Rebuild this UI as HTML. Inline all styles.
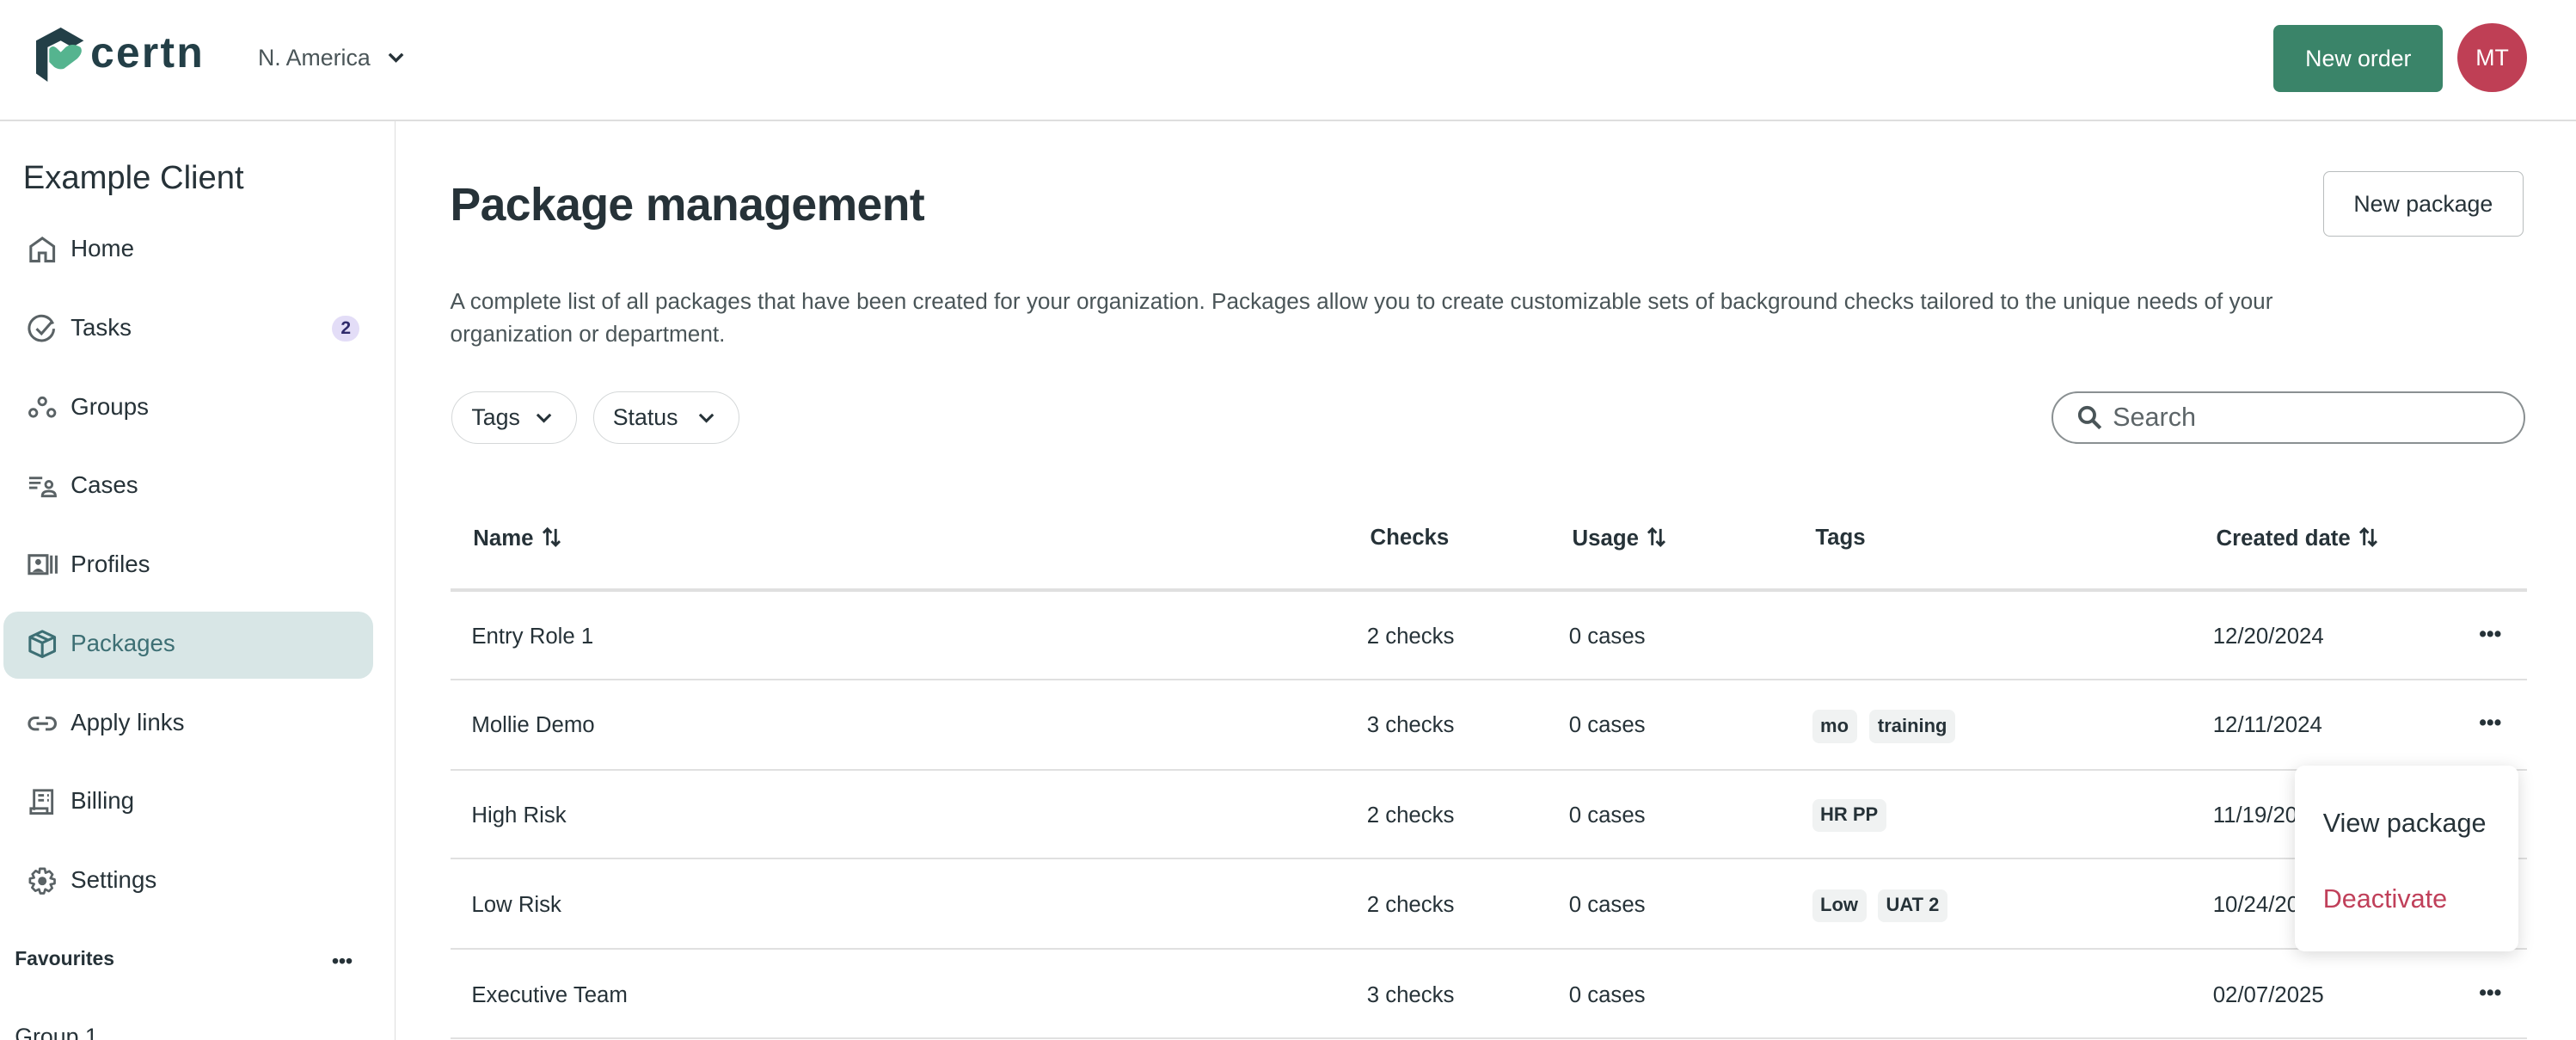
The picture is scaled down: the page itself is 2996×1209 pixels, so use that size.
<!DOCTYPE html>
<html><head><meta charset="utf-8"><style>
html,body{margin:0;padding:0;background:#fff;overflow:hidden}
#r{position:relative;width:1568px;height:633px;zoom:1.9107;font-family:"Liberation Sans",sans-serif;color:#263238;overflow:hidden}
.a{position:absolute;white-space:nowrap}
.nav{position:absolute;left:0;width:240px;height:20px}
.nav svg{position:absolute;left:17px;top:1px}
.nav span{position:absolute;left:43px;top:1px;font-size:14.5px;color:#263238}
.th{position:absolute;top:320px;font-size:13.5px;font-weight:bold;color:#263238}
.td{position:absolute;font-size:13.5px;color:#263238}
.line{position:absolute;left:274px;width:1264px;height:1px;background:#e0e0e0}
.chip{position:absolute;background:#f0f2f2;border-radius:4px;font-size:11.5px;font-weight:bold;padding:3px 5px;color:#263238;height:14px;line-height:14px}
.dots{position:absolute;left:1509px;font-size:13px;font-weight:bold;letter-spacing:0}
.sort{display:inline-block;vertical-align:-2px;margin-left:5px}
</style></head><body><div id="r">
<!-- header -->
<svg class="a" style="left:22px;top:17px" width="30" height="33" viewBox="0 0 30 33"><path d="M15 0 L29 8 L22 12 L15 8 L7 12 V21 L7 33 L0 28 V8 Z" fill="#233f47"/><path d="M8 13 Q10 10 13 13 L15 15 L18 12 Q22 9 27 12 Q29 15 25 19 L17 25 Q14 26 11 24 L8 21 Z" fill="#55b48f"/></svg>
<div class="a" style="left:55px;top:17px;font-size:26px;font-weight:bold;color:#233f47;letter-spacing:1.2px">certn</div>
<div class="a" style="left:157px;top:27px;font-size:14px;color:#4a5558">N. America</div>
<svg class="a" style="left:236px;top:31px" width="10" height="8" viewBox="0 0 10 8"><path d="M1 2 L5 6 L9 2" stroke="#263238" stroke-width="1.8" fill="none"/></svg>
<div class="a" style="left:1384px;top:15px;width:103px;height:41px;background:#3a8469;border-radius:4px;color:#fff;font-size:14px;line-height:41px;text-align:center">New order</div>
<div class="a" style="left:1496px;top:14px;width:42px;height:42px;border-radius:50%;background:#bf3f55;color:#fff;font-size:14px;line-height:42px;text-align:center">MT</div>
<div class="a" style="left:0;top:73px;width:1568px;height:1px;background:#dedede"></div>
<div class="a" style="left:240px;top:74px;width:1px;height:560px;background:#dedede"></div>
<!-- sidebar -->
<div class="a" style="left:14px;top:97px;font-size:20px;color:#263238">Example Client</div>
<div class="a" style="left:2px;top:372px;width:225px;height:41px;background:#d8e6e6;border-radius:9px"></div>
<div class="nav" style="top:142px"><svg width="18" height="18" viewBox="0 0 18 18"><path d="M2 16V7L9 2L16 7V16H11V11H7V16Z" stroke="#5a6265" stroke-width="1.6" fill="none"/></svg><span>Home</span></div>
<div class="nav" style="top:190px"><svg width="18" height="18" viewBox="0 0 18 18"><path d="M15.5 6A7.5 7.5 0 1 0 16 9" stroke="#5a6265" stroke-width="1.6" fill="none"/><path d="M5.5 9L8.5 12L15 4.5" stroke="#5a6265" stroke-width="1.6" fill="none"/></svg><span>Tasks</span></div>
<div class="a" style="left:202px;top:192px;width:17px;height:16px;border-radius:8px;background:#e3ddf7;color:#2f2a6b;font-size:11px;text-align:center;line-height:16px;font-weight:bold">2</div>
<div class="nav" style="top:238px"><svg width="18" height="18" viewBox="0 0 18 18"><circle cx="9" cy="5" r="2.2" stroke="#5a6265" stroke-width="1.5" fill="none"/><circle cx="3.5" cy="12" r="2.2" stroke="#5a6265" stroke-width="1.5" fill="none"/><circle cx="14.5" cy="12" r="2.2" stroke="#5a6265" stroke-width="1.5" fill="none"/></svg><span>Groups</span></div>
<div class="nav" style="top:286px"><svg width="18" height="18" viewBox="0 0 18 18"><path d="M1 4H9M1 7H8M1 10H6" stroke="#5a6265" stroke-width="1.5"/><circle cx="13" cy="8" r="2" stroke="#5a6265" stroke-width="1.5" fill="none"/><path d="M9 15Q9 12 13 12Q17 12 17 15Z" stroke="#5a6265" stroke-width="1.5" fill="none"/></svg><span>Cases</span></div>
<div class="nav" style="top:334px"><svg width="19" height="18" viewBox="0 0 19 18"><rect x="1" y="3" width="11" height="11" stroke="#5a6265" stroke-width="1.6" fill="none"/><circle cx="6.5" cy="7" r="1.8" fill="#5a6265"/><path d="M3 13Q6.5 9 10 13" fill="#5a6265"/><path d="M14.5 3V14M17.5 3V14" stroke="#5a6265" stroke-width="1.6"/></svg><span>Profiles</span></div>
<div class="nav" style="top:382px"><svg width="18" height="18" viewBox="0 0 18 18"><path d="M9 1L16.5 4.5V13L9 16.5L1.5 13V4.5Z M1.5 4.5L9 8L16.5 4.5 M9 8V16.5 M5 2.8L12.5 6.3" stroke="#3d6f74" stroke-width="1.6" fill="none" stroke-linejoin="round"/></svg><span style="color:#3d6f74">Packages</span></div>
<div class="nav" style="top:430px"><svg width="18" height="18" viewBox="0 0 18 18"><path d="M7 5.5H4.5A3.5 3.5 0 0 0 4.5 12.5H7M11 5.5H13.5A3.5 3.5 0 0 1 13.5 12.5H11M5.5 9H12.5" stroke="#5a6265" stroke-width="1.6" fill="none"/></svg><span>Apply links</span></div>
<div class="nav" style="top:478px"><svg width="18" height="18" viewBox="0 0 18 18"><path d="M4 14V2H15V16H2V13H12V16M6.5 5H10M6.5 8H10M12 5H13M12 8H13" stroke="#5a6265" stroke-width="1.5" fill="none"/></svg><span>Billing</span></div>
<div class="nav" style="top:526px"><svg width="18" height="18" viewBox="0 0 18 18"><path d="M7.5 1.5H10.5L11 4L13.3 3L15.2 5L14 7.3L16.5 8V10.5L14 11L15 13.3L13 15.2L10.8 14L10 16.5H7.8L7 14L4.8 15L2.8 13L4 10.8L1.5 10V7.5L4 7L3 4.8L5 2.8L7.2 4Z" stroke="#5a6265" stroke-width="1.4" fill="none" stroke-linejoin="round"/><circle cx="9" cy="9" r="2.6" fill="#5a6265"/></svg><span>Settings</span></div>
<div class="a" style="left:9px;top:576px;font-size:12px;font-weight:bold;color:#263238">Favourites</div>
<div class="a" style="left:202px;top:578px;font-size:12px;font-weight:bold">•••</div>
<div class="a" style="left:9px;top:623px;font-size:14px;color:#263238">Group 1</div>
<!-- main -->
<div class="a" style="left:274px;top:109px;font-size:28px;font-weight:bold;color:#263238;letter-spacing:-0.3px">Package management</div>
<div class="a" style="left:1414px;top:104px;width:121px;height:39px;border:1px solid #b8bcbd;border-radius:4px;font-size:14px;line-height:39px;text-align:center">New package</div>
<div class="a" style="left:274px;top:173px;font-size:13.7px;line-height:20px;color:#4a5558;white-space:normal;width:1175px">A complete list of all packages that have been created for your organization. Packages allow you to create customizable sets of background checks tailored to the unique needs of your organization or department.</div>
<div class="a" style="left:275px;top:238px;width:75px;height:31px;border:1px solid #d5d8d9;border-radius:16px"></div>
<div class="a" style="left:287px;top:246px;font-size:14px">Tags</div>
<svg class="a" style="left:326px;top:250px" width="10" height="8"><path d="M1 2L5 6L9 2" stroke="#263238" stroke-width="1.6" fill="none"/></svg>
<div class="a" style="left:361px;top:238px;width:88px;height:31px;border:1px solid #d5d8d9;border-radius:16px"></div>
<div class="a" style="left:373px;top:246px;font-size:14px">Status</div>
<svg class="a" style="left:425px;top:250px" width="10" height="8"><path d="M1 2L5 6L9 2" stroke="#263238" stroke-width="1.6" fill="none"/></svg>
<div class="a" style="left:1249px;top:238px;width:286px;height:30px;border:1.3px solid #8a9092;border-radius:16px"></div>
<svg class="a" style="left:1264px;top:246px" width="16" height="16" viewBox="0 0 16 16"><circle cx="6.5" cy="6.5" r="4.5" stroke="#4a5558" stroke-width="2" fill="none"/><path d="M10 10L14.5 14.5" stroke="#4a5558" stroke-width="2.2"/></svg>
<div class="a" style="left:1286px;top:245px;font-size:16px;color:#5d6568">Search</div>
<!-- table -->
<div class="th" style="left:288px">Name<svg class="sort" width="12" height="14" viewBox="0 0 12 14"><path d="M3.5 12V2M1 4.5L3.5 2L6 4.5M8.5 2V12M6 9.5L8.5 12L11 9.5" stroke="#263238" stroke-width="1.5" fill="none"/></svg></div>
<div class="th" style="left:834px">Checks</div>
<div class="th" style="left:957px">Usage<svg class="sort" width="12" height="14" viewBox="0 0 12 14"><path d="M3.5 12V2M1 4.5L3.5 2L6 4.5M8.5 2V12M6 9.5L8.5 12L11 9.5" stroke="#263238" stroke-width="1.5" fill="none"/></svg></div>
<div class="th" style="left:1105px">Tags</div>
<div class="th" style="left:1349px">Created date<svg class="sort" width="12" height="14" viewBox="0 0 12 14"><path d="M3.5 12V2M1 4.5L3.5 2L6 4.5M8.5 2V12M6 9.5L8.5 12L11 9.5" stroke="#263238" stroke-width="1.5" fill="none"/></svg></div>
<div class="line" style="top:358px;height:2px"></div>
<div class="line" style="top:413px"></div>
<div class="line" style="top:468px"></div>
<div class="line" style="top:522px"></div>
<div class="line" style="top:577px"></div>
<div class="line" style="top:631px"></div>

<div class="td" style="left:287px;top:380px">Entry Role 1</div><div class="td" style="left:832px;top:380px">2 checks</div><div class="td" style="left:955px;top:380px">0 cases</div><div class="td" style="left:1347px;top:380px">12/20/2024</div><div class="dots" style="top:379px">•••</div>
<div class="td" style="left:287px;top:434px">Mollie Demo</div><div class="td" style="left:832px;top:434px">3 checks</div><div class="td" style="left:955px;top:434px">0 cases</div><div class="td" style="left:1347px;top:434px">12/11/2024</div><div class="dots" style="top:433px">•••</div>
<div class="chip" style="left:1103px;top:432px">mo</div><div class="chip" style="left:1138px;top:432px">training</div>
<div class="td" style="left:287px;top:489px">High Risk</div><div class="td" style="left:832px;top:489px">2 checks</div><div class="td" style="left:955px;top:489px">0 cases</div><div class="td" style="left:1347px;top:489px">11/19/2024</div>
<div class="chip" style="left:1103px;top:486px">HR PP</div>
<div class="td" style="left:287px;top:543px">Low Risk</div><div class="td" style="left:832px;top:543px">2 checks</div><div class="td" style="left:955px;top:543px">0 cases</div><div class="td" style="left:1347px;top:543px">10/24/2024</div>
<div class="chip" style="left:1103px;top:541px">Low</div><div class="chip" style="left:1143px;top:541px">UAT 2</div>
<div class="td" style="left:287px;top:598px">Executive Team</div><div class="td" style="left:832px;top:598px">3 checks</div><div class="td" style="left:955px;top:598px">0 cases</div><div class="td" style="left:1347px;top:598px">02/07/2025</div><div class="dots" style="top:597px">•••</div>
<!-- menu -->
<div class="a" style="left:1397px;top:466px;width:136px;height:113px;background:#fff;border-radius:6px;box-shadow:0 2px 10px rgba(0,0,0,0.15)"></div>
<div class="a" style="left:1414px;top:492px;font-size:16px;color:#263238">View package</div>
<div class="a" style="left:1414px;top:538px;font-size:16px;color:#c0405a">Deactivate</div>
</div></body></html>
